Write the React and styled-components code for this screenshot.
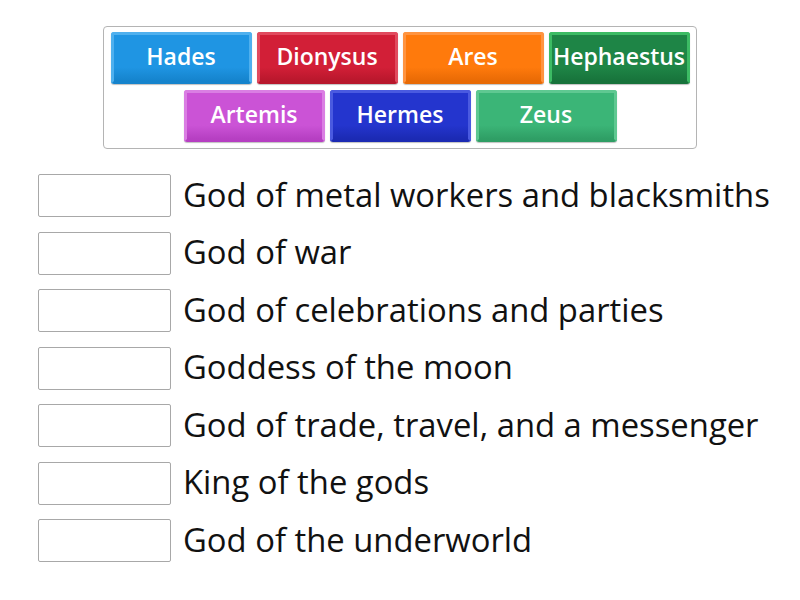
import React from 'react';
import styled, { createGlobalStyle } from 'styled-components';

const GlobalStyle = createGlobalStyle`
  body {
    margin: 0;
    background: #ffffff;
    font-family: 'Open Sans', 'Liberation Sans', sans-serif;
  }
`;

const TILES = [
  [
    { name: 'Hades', face: '#1f95e3', light: '#4fb0ee', dark: '#1583cc' },
    { name: 'Dionysus', face: '#d21f37', light: '#e14a5e', dark: '#b8172c' },
    { name: 'Ares', face: '#ff7a0c', light: '#ff9440', dark: '#e86a05' },
    { name: 'Hephaestus', face: '#1e8546', light: '#3cbb64', dark: '#17733b' },
  ],
  [
    { name: 'Artemis', face: '#cb53d6', light: '#da7ee3', dark: '#b63fc2' },
    { name: 'Hermes', face: '#2435ce', light: '#4a5ae0', dark: '#1b2ab3' },
    { name: 'Zeus', face: '#3bb577', light: '#5fc891', dark: '#2f9e65' },
  ],
];

const CLUES = [
  'God of metal workers and blacksmiths',
  'God of war',
  'God of celebrations and parties',
  'Goddess of the moon',
  'God of trade, travel, and a messenger',
  'King of the gods',
  'God of the underworld',
];

const Page = styled.div`
  padding: 26px 0 0 38px;
  width: 762px;
  box-sizing: border-box;
`;

const Bank = styled.div`
  margin-left: 65px;
  width: 594px;
  box-sizing: border-box;
  border: 1px solid #b4b4b4;
  border-radius: 4px;
  padding: 5px 6px 6px;
  display: flex;
  flex-direction: column;
  align-items: center;
  gap: 6px;
`;

const TileRow = styled.div`
  display: flex;
  gap: 5px;
`;

const Tile = styled.div`
  width: 141px;
  height: 52px;
  box-sizing: border-box;
  border-radius: 3px;
  background: linear-gradient(
    to bottom,
    ${(p) => p.$face} 0%,
    ${(p) => p.$face} 70%,
    ${(p) => p.$dark} 100%
  );
  border: 3px solid ${(p) => p.$light};
  border-bottom-color: ${(p) => p.$dark};
  box-shadow: 0 1px 1px rgba(0, 0, 0, 0.25);
  display: flex;
  align-items: center;
  justify-content: center;
  padding-bottom: 4px;
  color: #ffffff;
  font-weight: 600;
  font-size: 23px;
  white-space: nowrap;
  overflow: visible;
`;

const List = styled.div`
  margin-top: 25px;
  display: flex;
  flex-direction: column;
  gap: 14.5px;
`;

const Row = styled.div`
  display: flex;
  align-items: center;
  gap: 12px;
`;

const DropBox = styled.div`
  width: 133px;
  height: 43px;
  box-sizing: border-box;
  border: 1px solid #a8a8a8;
  border-radius: 2px;
  background: #ffffff;
  flex-shrink: 0;
`;

const Clue = styled.div`
  font-size: 32.8px;
  color: #111111;
  white-space: nowrap;
  line-height: 43px;
  margin-top: -3px;
`;

export default function App() {
  return (
    <>
      <GlobalStyle />
      <Page>
        <Bank>
          {TILES.map((row, i) => (
            <TileRow key={i}>
              {row.map((t) => (
                <Tile key={t.name} $face={t.face} $light={t.light} $dark={t.dark}>
                  {t.name}
                </Tile>
              ))}
            </TileRow>
          ))}
        </Bank>
        <List>
          {CLUES.map((c) => (
            <Row key={c}>
              <DropBox />
              <Clue>{c}</Clue>
            </Row>
          ))}
        </List>
      </Page>
    </>
  );
}
